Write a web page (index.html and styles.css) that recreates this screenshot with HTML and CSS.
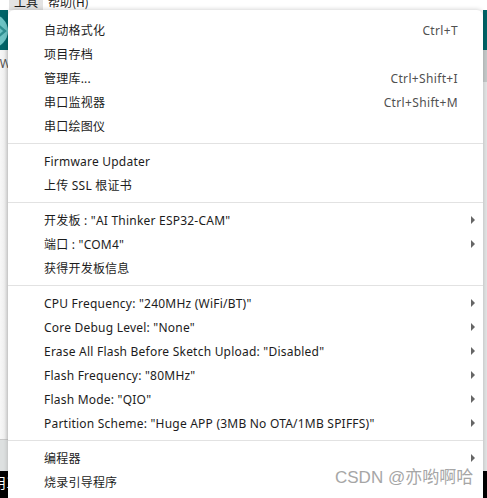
FILE: index.html
```html
<!DOCTYPE html>
<html lang="zh-CN">
<head>
<meta charset="utf-8">
<title>工具菜单</title>
<link rel="stylesheet" href="styles.css">
</head>
<body>
<div class="screen">
  <div class="menubar">
    <span class="bar-gap"></span>
    <span class="bar-item active">工具</span>
    <span class="bar-item">帮助(H)</span>
  </div>
  <div class="main">
    <div class="side side-left">
      <div class="toolbar">
        <svg width="8" height="40" viewBox="0 0 8 40">
          <circle cx="-9" cy="21" r="17" fill="#6cc3c4"/>
          <path d="M-2 15 L5 21 L-2 27" fill="none" stroke="#2f8f91" stroke-width="2.4"/>
        </svg>
      </div>
      <div class="pale"><span class="tab-text">aW</span></div>
      <div class="band"></div>
      <div class="dark"><span class="dark-text">用1</span></div>
    </div>

    <div class="menu">
      <div class="group">
        <div class="item"><span class="label">自动格式化</span><span class="key">Ctrl+T</span><span class="sub"></span></div>
        <div class="item"><span class="label">项目存档</span><span class="key"></span><span class="sub"></span></div>
        <div class="item"><span class="label">管理库...</span><span class="key">Ctrl+Shift+I</span><span class="sub"></span></div>
        <div class="item"><span class="label">串口监视器</span><span class="key">Ctrl+Shift+M</span><span class="sub"></span></div>
        <div class="item"><span class="label">串口绘图仪</span><span class="key"></span><span class="sub"></span></div>
      </div>
      <div class="sep"></div>
      <div class="group">
        <div class="item"><span class="label">Firmware Updater</span><span class="key"></span><span class="sub"></span></div>
        <div class="item"><span class="label">上传 SSL 根证书</span><span class="key"></span><span class="sub"></span></div>
      </div>
      <div class="sep"></div>
      <div class="group">
        <div class="item"><span class="label">开发板 : "AI Thinker ESP32-CAM"</span><span class="key"></span><span class="sub"><i class="arrow"></i></span></div>
        <div class="item"><span class="label">端口 : "COM4"</span><span class="key"></span><span class="sub"><i class="arrow"></i></span></div>
        <div class="item"><span class="label">获得开发板信息</span><span class="key"></span><span class="sub"></span></div>
      </div>
      <div class="sep"></div>
      <div class="group">
        <div class="item"><span class="label">CPU Frequency: "240MHz (WiFi/BT)"</span><span class="key"></span><span class="sub"><i class="arrow"></i></span></div>
        <div class="item"><span class="label">Core Debug Level: "None"</span><span class="key"></span><span class="sub"><i class="arrow"></i></span></div>
        <div class="item"><span class="label">Erase All Flash Before Sketch Upload: "Disabled"</span><span class="key"></span><span class="sub"><i class="arrow"></i></span></div>
        <div class="item"><span class="label">Flash Frequency: "80MHz"</span><span class="key"></span><span class="sub"><i class="arrow"></i></span></div>
        <div class="item"><span class="label">Flash Mode: "QIO"</span><span class="key"></span><span class="sub"><i class="arrow"></i></span></div>
        <div class="item"><span class="label">Partition Scheme: "Huge APP (3MB No OTA/1MB SPIFFS)"</span><span class="key"></span><span class="sub"><i class="arrow"></i></span></div>
      </div>
      <div class="sep"></div>
      <div class="group">
        <div class="item"><span class="label">编程器</span><span class="key"></span><span class="sub"><i class="arrow"></i></span></div>
        <div class="item"><span class="label">烧录引导程序</span><span class="key"></span><span class="sub"></span></div>
      </div>
    </div>

    <div class="side side-right">
      <div class="toolbar"></div>
      <div class="r-gray"></div>
      <div class="r-light"></div>
      <div class="dark"></div>
    </div>
  </div>
  <div class="watermark">CSDN @亦哟啊哈</div>
</div>
</body>
</html>
```

FILE: styles.css
```css
* { box-sizing: border-box; }

html, body {
  margin: 0;
  padding: 0;
  background: #ffffff;
}

.screen {
  position: relative;
  width: 487px;
  height: 498px;
  overflow: hidden;
  font-family: "Noto Sans", "Noto Sans CJK SC", sans-serif;
  font-size: 12px;
  color: #1c1c1c;
  display: flex;
  flex-direction: column;
}

/* ---------- menu bar (cut at top) ---------- */
.menubar {
  height: 10px;
  flex: none;
  display: flex;
  align-items: flex-end;
  overflow: hidden;
  background: #ffffff;
}

.bar-gap {
  width: 9px;
  height: 10px;
  flex: none;
}

.bar-item {
  height: 17px;
  line-height: 17px;
  padding: 0 5px;
  flex: none;
  color: #1a1a1a;
  font-family: "Noto Sans CJK SC", sans-serif;
}

.bar-item.active {
  background: #e3e3e3;
  width: 34px;
  padding: 0 5px;
}

/* ---------- main area ---------- */
.main {
  flex: 1;
  display: flex;
  min-height: 0;
}

.side {
  flex: none;
  display: flex;
  flex-direction: column;
}

.side-left { width: 8px; }
.side-right { width: 4px; }

.toolbar {
  height: 40px;
  flex: none;
  background: #006468;
  overflow: hidden;
}

.toolbar svg { display: block; }

.pale {
  flex: 1;
  background: linear-gradient(to right, #f7f7f7 0%, #efefef 60%, #dcdcdc 100%);
  overflow: hidden;
  position: relative;
}

.tab-text {
  display: block;
  margin-top: 7px;
  margin-left: -7px;
  font-size: 12px;
  color: #555;
  white-space: nowrap;
  line-height: 14px;
}

.band {
  height: 32px;
  flex: none;
  border-top: 1px solid #c9c9c9;
  background: #dde0e0;
}

.dark {
  height: 27px;
  flex: none;
  background: #000000;
  overflow: hidden;
}

.dark-text {
  display: block;
  color: #fff;
  font-size: 14px;
  line-height: 16px;
  margin-top: 3px;
  margin-left: -8px;
  white-space: nowrap;
  font-family: "Noto Sans CJK SC", sans-serif;
}

.r-gray {
  height: 32px;
  flex: none;
  background: #c6cbcb;
}

.r-light {
  flex: 1;
  background: #e4e6e6;
}

/* ---------- dropdown menu ---------- */
.menu {
  width: 475px;
  flex: none;
  background: #ffffff;
  border-radius: 6px 6px 0 0;
  padding-top: 8px;
  box-shadow: 0 0 5px rgba(0, 0, 0, 0.22);
  position: relative;
  z-index: 2;
}

.item {
  height: 24px;
  display: flex;
  align-items: center;
  padding-left: 36px;
  padding-right: 8px;
  white-space: nowrap;
  letter-spacing: 0.22px;
}

.label {
  flex: 1;
  color: #1c1c1c;
}

.key {
  color: #505050;
  letter-spacing: 0.35px;
}

.sub {
  width: 17px;
  height: 24px;
  flex: none;
  display: flex;
  align-items: center;
  justify-content: flex-end;
}

.arrow {
  display: block;
  width: 0;
  height: 0;
  border-top: 4px solid transparent;
  border-bottom: 4px solid transparent;
  border-left: 4px solid #666666;
}

.sep {
  height: 1px;
  margin: 5px 0;
  background: #e2e2e2;
}

/* ---------- watermark ---------- */
.watermark {
  position: absolute;
  left: 335px;
  top: 468px;
  font-size: 17px;
  line-height: 20px;
  color: #a6a6a6;
  white-space: nowrap;
  z-index: 3;
  font-family: "Liberation Sans", "Noto Sans CJK SC", sans-serif;
}
```
